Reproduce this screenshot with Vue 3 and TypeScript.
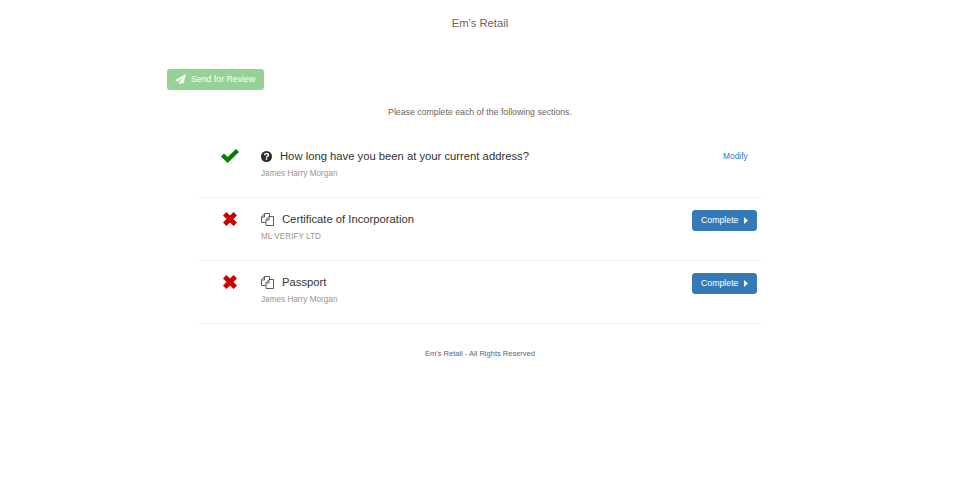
<script setup lang="ts">
interface Item {
  title: string
  sub: string
  done: boolean
  kind: 'question' | 'docs'
}
const items: Item[] = [
  { title: 'How long have you been at your current address?', sub: 'James Harry Morgan', done: true, kind: 'question' },
  { title: 'Certificate of Incorporation', sub: 'ML VERIFY LTD', done: false, kind: 'docs' },
  { title: 'Passport', sub: 'James Harry Morgan', done: false, kind: 'docs' },
]
</script>

<template>
  <div class="page">
    <header class="brand">Em's Retail</header>
    <div class="toolbar">
      <button class="send" type="button">
        <svg class="plane" viewBox="0 0 16 16" width="11" height="11"><path fill="#fff" d="M16 0 0 9.2l4.3 1.8L13.5 3 6.2 11.9V16l2.6-3.3 3.4 1.4z" /></svg>
        Send for Review
      </button>
    </div>
    <p class="intro">Please complete each of the following sections.</p>
    <ul class="list">
      <li v-for="item in items" :key="item.title" class="row">
        <div class="status">
          <svg v-if="item.done" viewBox="0 0 18 14" width="18" height="14"><path fill="#008000" d="M6.6 14 0 7.4 3 4.4l3.6 3.6L15 0l3 3z" /></svg>
          <svg v-else viewBox="0 0 14 14" width="14" height="14"><path fill="#cc0000" d="M3.4 0 7 3.6 10.6 0 14 3.4 10.4 7 14 10.6 10.6 14 7 10.4 3.4 14 0 10.6 3.6 7 0 3.4z" /></svg>
        </div>
        <div class="body">
          <div class="title" :class="item.kind">
            <svg v-if="item.kind === 'question'" class="kind" viewBox="0 0 12 12" width="11" height="11">
              <circle cx="6" cy="6" r="6" fill="#2b2b2b" />
              <path fill="none" stroke="#fff" stroke-width="1.6" d="M3.9 4.6C4 3.4 4.9 2.8 6 2.8c1.2 0 2.1.7 2.1 1.7 0 1.5-2.1 1.4-2.1 2.8" />
              <rect x="5.1" y="8.1" width="1.8" height="1.6" fill="#fff" />
            </svg>
            <svg v-else class="kind" viewBox="0 0 13 13" width="13" height="13" fill="none" stroke="#4a4a4a" stroke-width="0.9">
              <path d="M4.5 9.5H.5V4L3.5.5h5v3.5" />
              <path d="M3.5.8V4H.6" />
              <path d="M5 12.5V6.8L8 3.5h4.5v9z" />
              <path d="M8 3.8V7H5.1" />
            </svg>
            <span>{{ item.title }}</span>
          </div>
          <div class="sub">{{ item.sub }}</div>
        </div>
        <div class="action">
          <a v-if="item.done" class="modify" href="#">Modify</a>
          <button v-else class="complete" type="button">
            Complete
            <svg viewBox="0 0 4 7" width="4" height="7"><path fill="#fff" d="M0 0l4 3.5L0 7z" /></svg>
          </button>
        </div>
      </li>
    </ul>
    <footer class="foot">Em's Retail - All Rights Reserved</footer>
  </div>
</template>

<style>
html, body { margin: 0; background: #fff; }
</style>

<style scoped>
.page {
  width: 626px;
  margin: 0 auto;
  min-height: 493px;
  font-family: "Liberation Sans", Arial, sans-serif;
  color: #333;
}
.brand {
  padding-top: 15px;
  height: 54px;
  line-height: 16px;
  text-align: center;
  font-size: 11.25px;
  color: #6b6560;
}
.toolbar { height: 21px; display: flex; }
.send {
  display: flex;
  align-items: center;
  gap: 5px;
  width: 97px;
  height: 21px;
  padding: 0 0 1px 8px;
  border: 0;
  border-radius: 3px;
  background: #95d295;
  color: #fff;
  font: 8.75px "Liberation Sans", Arial, sans-serif;
}
.plane { flex: none; }
.intro {
  margin: 16px 0 0;
  line-height: 12px;
  text-align: center;
  font-size: 8.75px;
  color: #6e665c;
}
.list {
  list-style: none;
  margin: 17px 32px 0;
  padding: 0;
}
.row {
  display: flex;
  height: 62px;
  border-bottom: 1px solid #eee;
}
.status {
  width: 62px;
  padding-top: 14px;
  display: flex;
  justify-content: center;
  align-items: flex-start;
  height: 14px;
}
.body { flex: 1; padding-top: 14px; }
.title {
  display: flex;
  align-items: center;
  height: 14px;
  font-size: 11.25px;
  line-height: 14px;
  color: #333;
}
.kind { flex: none; }
.question .kind { margin-right: 8px; }
.docs .kind { margin-right: 8px; }
.sub {
  margin-top: 5px;
  line-height: 12px;
  font-size: 8.2px;
  color: #9a958e;
}
.action {
  width: 69px;
  padding-top: 12px;
  display: flex;
  justify-content: flex-end;
  align-items: flex-start;
  margin-right: 4px;
}
.modify {
  width: 34px;
  margin-top: 3px;
  line-height: 12px;
  font-size: 8.4px;
  color: #337ab7;
  text-decoration: none;
}
.complete {
  display: flex;
  align-items: center;
  gap: 6px;
  width: 65px;
  height: 21px;
  padding: 0 0 1px 8px;
  border: 1px solid #337ab7;
  border-radius: 3px;
  background: #337ab7;
  color: #fff;
  font: 8.75px "Liberation Sans", Arial, sans-serif;
}
.foot {
  margin-top: 24px;
  line-height: 12px;
  text-align: center;
  font-size: 7.5px;
  color: #5d6470;
}
</style>
